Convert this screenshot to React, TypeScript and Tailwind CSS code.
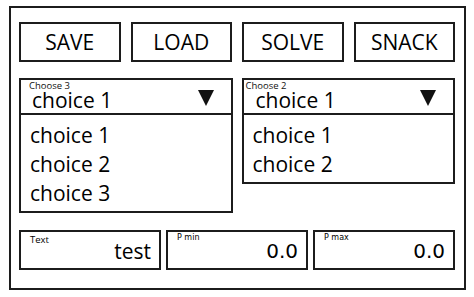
import React from "react";

const open = { fontFamily: '"Open Sans", "Noto Sans", sans-serif' };
const dejavu = { fontFamily: '"DejaVu Sans", Verdana, sans-serif' };

function Caret() {
  return (
    <svg width="16" height="16" viewBox="0 0 16 16" className="shrink-0">
      <polygon points="0,0 16,0 8,16" fill="#111" />
    </svg>
  );
}

type DropProps = {
  label: string;
  value: string;
  options: string[];
  labelPad: string;
  valuePad: string;
};

function Dropdown({ label, value, options, labelPad, valuePad }: DropProps) {
  return (
    <div className="border-2 border-[#1c1c1c]">
      <div className="flex h-[35px] items-end justify-between border-b-2 border-[#1c1c1c] pr-[17px]">
        <div className="flex flex-col pb-[3px]">
          <span className={`text-[9.5px] leading-[9px] text-[#111] ${labelPad}`}>{label}</span>
          <span className={`text-[21px] leading-[20px] text-black ${valuePad}`}>{value}</span>
        </div>
        <div className="mb-[7px]">
          <Caret />
        </div>
      </div>
      <ul className="pt-[6px] pb-[3px] pl-[9px]">
        {options.map((o) => (
          <li key={o} className="text-[21px] leading-[29px] text-black">
            {o}
          </li>
        ))}
      </ul>
    </div>
  );
}

function Field({ label, value, mono }: { label: string; value: string; mono?: boolean }) {
  return (
    <div className="flex h-[40px] flex-col border-2 border-[#1c1c1c] pl-[9px] pr-[8px]" style={mono ? dejavu : open}>
      <span className={mono ? "pt-[2px] text-[8px] leading-[8px]" : "pt-[3px] text-[9.5px] leading-[9px]"}>
        {label}
      </span>
      <span
        className={
          mono
            ? "-mt-[1px] text-right text-[20px] leading-[20px] text-black"
            : "-mt-[3px] text-right text-[21px] leading-[21px] text-black"
        }
      >
        {value}
      </span>
    </div>
  );
}

export default function App() {
  const buttons = ["SAVE", "LOAD", "SOLVE", "SNACK"];
  return (
    <div className="h-[297px] w-[474px] bg-white pl-[9px] pt-[6px]" style={open}>
      <div className="h-[284px] w-[457px] border-2 border-[#1c1c1c] pl-[8px] pt-[14px]">
        <div className="grid w-[436px] grid-cols-4 gap-[10px]">
          {buttons.map((b) => (
            <button
              key={b}
              className="flex h-[40px] items-center justify-center border-2 border-[#1c1c1c] text-[21px] leading-none text-black"
            >
              {b}
            </button>
          ))}
        </div>
        <div className="mt-[16px] grid w-[436px] grid-cols-2 items-start gap-[9px]">
          <Dropdown
            label="Choose 3"
            value="choice 1"
            options={["choice 1", "choice 2", "choice 3"]}
            labelPad="pl-[8px]"
            valuePad="pl-[11px]"
          />
          <Dropdown
            label="Choose 2"
            value="choice 1"
            options={["choice 1", "choice 2"]}
            labelPad="pl-[2px] pt-[2px]"
            valuePad="pl-[12px]"
          />
        </div>
        <div className="mt-[17px] grid w-[436px] grid-cols-3 gap-[5px]">
          <Field label="Text" value="test" />
          <Field label="P min" value="0.0" mono />
          <Field label="P max" value="0.0" mono />
        </div>
      </div>
    </div>
  );
}
